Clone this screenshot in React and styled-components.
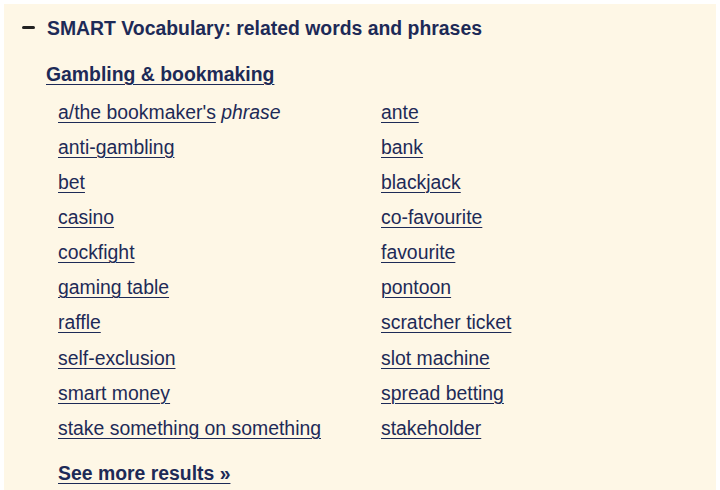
import React from 'react';
import styled, { createGlobalStyle } from 'styled-components';

const GlobalStyle = createGlobalStyle`
  html, body {
    margin: 0;
    padding: 0;
    background: #ffffff;
    overflow: hidden;
  }
  body {
    font-family: "Liberation Sans", Arial, sans-serif;
  }
`;

const Page = styled.div`
  padding: 4px 4px 0 4px;
`;

const Panel = styled.section`
  background: #fef7e6;
  padding: 12px 0 0 0;
  color: #1d2a57;
  font-size: 19.4px;
  height: 486px;
  box-sizing: border-box;
  overflow: hidden;
`;

const Header = styled.div`
  display: flex;
  align-items: center;
  height: 24px;
  padding-left: 18px;
  gap: 12px;
`;

const Minus = styled.span`
  display: block;
  width: 13px;
  height: 3px;
  border-radius: 1.5px;
  background: #222222;
  margin-top: -1px;
`;

const Title = styled.h2`
  margin: 0;
  font-size: 19.4px;
  font-weight: 700;
  line-height: 24px;
`;

const Body = styled.div`
  padding-left: 42px;
  margin-top: 22px;
`;

const GroupLink = styled.a`
  display: inline-block;
  font-weight: 700;
  line-height: 24px;
  color: #1d2a57;
  text-decoration: underline;
  text-underline-offset: 3px;
  text-decoration-thickness: 1px;
`;

const WordGrid = styled.ul`
  list-style: none;
  margin: 8.5px 0 0 0;
  padding: 0 0 0 12px;
  display: grid;
  grid-template-columns: 323px 1fr;
`;

const Word = styled.li`
  line-height: 35.15px;
  white-space: nowrap;
`;

const WordLink = styled.a`
  color: #1d2a57;
  text-decoration: underline;
  text-underline-offset: 3px;
  text-decoration-thickness: 1px;
`;

const Label = styled.em`
  font-style: italic;
`;

const MoreLink = styled.a`
  display: inline-block;
  margin: 15px 0 0 12px;
  font-weight: 700;
  line-height: 24px;
  color: #1d2a57;
  text-decoration: underline;
  text-underline-offset: 3px;
  text-decoration-thickness: 1px;
`;

const words = [
  ["a/the bookmaker's", 'phrase'],
  ['ante'],
  ['anti-gambling'],
  ['bank'],
  ['bet'],
  ['blackjack'],
  ['casino'],
  ['co-favourite'],
  ['cockfight'],
  ['favourite'],
  ['gaming table'],
  ['pontoon'],
  ['raffle'],
  ['scratcher ticket'],
  ['self-exclusion'],
  ['slot machine'],
  ['smart money'],
  ['spread betting'],
  ['stake something on something'],
  ['stakeholder'],
];

export default function App() {
  return (
    <Page>
      <GlobalStyle />
      <Panel>
        <Header>
          <Minus />
          <Title>SMART Vocabulary: related words and phrases</Title>
        </Header>
        <Body>
          <GroupLink href="#">Gambling &amp; bookmaking</GroupLink>
          <WordGrid>
            {words.map(([w, label]) => (
              <Word key={w}>
                <WordLink href="#">{w}</WordLink>
                {label && <> <Label>{label}</Label></>}
              </Word>
            ))}
          </WordGrid>
          <MoreLink href="#">See more results »</MoreLink>
        </Body>
      </Panel>
    </Page>
  );
}
